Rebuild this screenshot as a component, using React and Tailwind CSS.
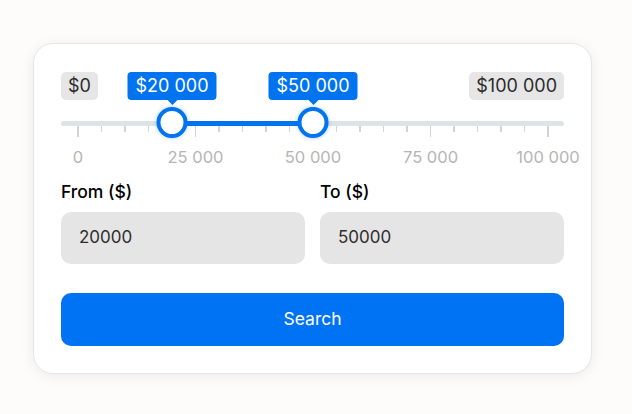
import React from "react";

const MIN = 0;
const MAX = 100000;
const from = 20000;
const to = 50000;
const INSET = 17;
const SPAN = 470;
const pos = (v) => INSET + ((v - MIN) / (MAX - MIN)) * SPAN;

const ticks = Array.from({ length: 21 }, (_, i) => i * 5000);
const majors = [0, 25000, 50000, 75000, 100000];
const fmt = (v) => v.toLocaleString("en-US").replace(/,/g, " ");

function Tooltip({ value }) {
  return (
    <div
      className="absolute top-0 -translate-x-1/2 flex flex-col items-center"
      style={{ left: pos(value) }}
    >
      <div className="h-[28px] px-[8px] rounded-[4px] bg-[#0073f0] text-white text-[18px] leading-[28px] whitespace-nowrap">
        ${fmt(value)}
      </div>
      <div className="w-0 h-0 border-l-[5px] border-r-[5px] border-t-[5px] border-l-transparent border-r-transparent border-t-[#0073f0]" />
    </div>
  );
}

function Thumb({ value }) {
  return (
    <div
      className="absolute top-0 -translate-x-1/2 w-[31px] h-[31px] rounded-full bg-white border-[4.5px] border-[#0073f0] shadow-[0_0_4px_rgba(0,115,240,0.35)]"
      style={{ left: pos(value) }}
    />
  );
}

export default function App() {
  return (
    <div
      className="w-[632px] h-[414px] bg-[#fdfcfb] pt-[43px] pl-[33px]"
      style={{ fontFamily: "Inter, 'Noto Sans', sans-serif" }}
    >
      <div className="w-[559px] h-[331px] bg-white rounded-[20px] border border-[#e6e6e6] shadow-[0_2px_14px_rgba(0,0,0,0.07)] px-[27px] pt-[28px] flex flex-col">
        <div className="relative h-[32px] flex justify-between items-start">
          <div className="h-[28px] px-[7px] rounded-[5px] bg-[#e6e6e6] text-[#2b2b2b] text-[18px] leading-[28px]">
            $0
          </div>
          <div className="h-[28px] px-[7px] rounded-[5px] bg-[#e6e6e6] text-[#2b2b2b] text-[18px] leading-[28px]">
            $100 000
          </div>
          <Tooltip value={from} />
          <Tooltip value={to} />
        </div>
        <div className="relative h-[38px] mt-[3px]">
          <div className="absolute left-0 right-0 top-[14px] h-[5px] rounded-full bg-[#dee3ea]" />
          <div
            className="absolute top-[14px] h-[5px] bg-[#0073f0]"
            style={{ left: pos(from), width: pos(to) - pos(from) }}
          />
          {ticks.map((t) => (
            <div
              key={t}
              className={
                majors.includes(t)
                  ? "absolute top-[19px] w-[1.5px] h-[11px] bg-[#d4d4d4]"
                  : "absolute top-[19px] w-[1.5px] h-[6px] bg-[#d4d4d4]"
              }
              style={{ left: pos(t) - 0.75 }}
            />
          ))}
          <Thumb value={from} />
          <Thumb value={to} />
        </div>
        <div className="relative h-[24px]">
          {majors.map((t) => (
            <div
              key={t}
              className="absolute top-0 -translate-x-1/2 text-[16.5px] leading-[24px] text-[#b5b5b5] whitespace-nowrap"
              style={{ left: pos(t) }}
            >
              {fmt(t)}
            </div>
          ))}
        </div>
        <div className="grid grid-cols-2 gap-[15px] mt-[11px]">
          <div className="flex flex-col">
            <label className="text-[17.5px] leading-[24px] font-medium text-black">From ($)</label>
            <div className="mt-[8px] h-[52px] rounded-[10px] bg-[#e5e5e5] px-[18px] flex items-center text-[17px] text-[#2e2e2e]">
              20000
            </div>
          </div>
          <div className="flex flex-col">
            <label className="text-[17.5px] leading-[24px] font-medium text-black">To ($)</label>
            <div className="mt-[8px] h-[52px] rounded-[10px] bg-[#e5e5e5] px-[18px] flex items-center text-[17px] text-[#2e2e2e]">
              50000
            </div>
          </div>
        </div>
        <button className="mt-[29px] h-[53px] rounded-[10px] bg-[#0073f5] text-white text-[17.5px] flex items-center justify-center">
          Search
        </button>
      </div>
    </div>
  );
}
